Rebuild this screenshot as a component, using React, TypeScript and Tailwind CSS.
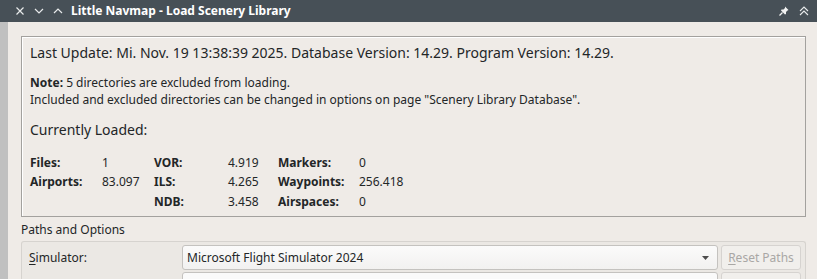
import React from 'react';

const stats: [string, string, string, string, string, string][] = [
  ['Files:', '1', 'VOR:', '4.919', 'Markers:', '0'],
  ['Airports:', '83.097', 'ILS:', '4.265', 'Waypoints:', '256.418'],
  ['', '', 'NDB:', '3.458', 'Airspaces:', '0'],
];

const App: React.FC = () => {
  return (
    <div className="w-[817px] h-[279px] overflow-hidden bg-[#efebe7] text-[#232627] font-['Noto_Sans',sans-serif] flex flex-col">
      {/* Title bar */}
      <div className="h-[22px] shrink-0 bg-[#475057] flex items-center text-white">
        <div className="flex items-center pl-[16px]">
          <svg width="8" height="8" viewBox="0 0 8 8">
            <path d="M0.5 0.5l7 7M7.5 0.5l-7 7" stroke="#e8eaeb" strokeWidth="1.2" fill="none" />
          </svg>
          <svg width="10" height="6" viewBox="0 0 10 6" className="ml-[10px]">
            <path d="M1 1l4 4 4-4" stroke="#e8eaeb" strokeWidth="1.2" fill="none" />
          </svg>
          <svg width="10" height="6" viewBox="0 0 10 6" className="ml-[9px]">
            <path d="M1 5l4-4 4 4" stroke="#e8eaeb" strokeWidth="1.2" fill="none" />
          </svg>
        </div>
        <span className="ml-[8px] text-[12px] font-bold">Little Navmap - Load Scenery Library</span>
        <div className="ml-auto flex items-center gap-[10px] pr-[8px]">
          <svg width="10" height="10" viewBox="0 0 10 10">
            <path d="M6 0.5l3.5 3.5-1 0.5-1.5 1.5 0 2-1 0.5-4-4 0.5-1 2 0 1.5-1.5z" fill="#f2f2f2" />
            <path d="M3.5 6.5l-3 3" stroke="#f2f2f2" strokeWidth="1.2" />
          </svg>
          <svg width="10" height="10" viewBox="0 0 10 10">
            <path d="M1 5l4-4 4 4M1 9l4-4 4 4" stroke="#e8eaeb" strokeWidth="1.1" fill="none" />
          </svg>
        </div>
      </div>

      <div className="flex flex-1 min-h-0">
        <div className="w-[8px] shrink-0 bg-[#c0c0c0]" />
        <div className="flex-1 pl-[13px] pr-[11px] flex flex-col min-h-0">
          {/* Database info frame */}
          <div className="shrink-0 mt-[14px] h-[181px] border border-[#a3a19e] shadow-[inset_1px_1px_0_#ffffff] px-[8px] pt-[6px]">
            <div className="text-[14px] leading-[20px]">
              Last Update: Mi. Nov. 19 13:38:39 2025. Database Version: 14.29. Program Version: 14.29.
            </div>
            <div className="mt-[11px] text-[12px] leading-[17px]">
              <div><span className="font-bold">Note:</span> 5 directories are excluded from loading.</div>
              <div>Included and excluded directories can be changed in options on page "Scenery Library Database".</div>
            </div>
            <div className="mt-[12px] text-[14px] leading-[20px]">Currently Loaded:</div>
            <div className="mt-[13px] text-[12px] flex flex-col">
              {stats.map((r, i) => (
                <div key={i} className="flex items-center h-[19.5px] whitespace-nowrap">
                  <span className="w-[72px] shrink-0 font-bold">{r[0]}</span>
                  <span className="w-[52px] shrink-0">{r[1]}</span>
                  <span className="w-[74px] shrink-0 font-bold">{r[2]}</span>
                  <span className="w-[50px] shrink-0">{r[3]}</span>
                  <span className="w-[81px] shrink-0 font-bold">{r[4]}</span>
                  <span>{r[5]}</span>
                </div>
              ))}
            </div>
          </div>

          {/* Paths and Options */}
          <div className="shrink-0 mt-[4px] text-[12px] leading-[17px] w-[104px] overflow-hidden whitespace-nowrap">Paths and Options</div>
          <div className="shrink-0 mt-[3px] h-[60px] border border-[#d6d3cf] border-b-0 rounded-t-[3px] bg-[#ebe8e4] pl-[7px] pr-[4px] pt-[3px]">
            <div className="flex items-center h-[25px]">
              <span className="w-[153px] text-[12px]"><span className="underline underline-offset-[2px]">S</span>imulator:</span>
              <div className="w-[536px] h-[25px] rounded-[3px] border border-[#c4c2bf] bg-gradient-to-b from-[#fbfbfb] to-[#f2f1f0] flex items-center pl-[4px] pr-[8px] text-[12px]">
                <span className="flex-1">Microsoft Flight Simulator 2024</span>
                <svg width="7" height="4" viewBox="0 0 7 4"><path d="M0 0h7l-3.5 4z" fill="#4d4d4d" /></svg>
              </div>
              <div className="ml-[3px] w-[80px] h-[25px] rounded-[3px] border border-[#d6d3d0] bg-[#f1efec] flex items-center justify-center text-[12px] text-[#a9a7a5]">
                <span><span className="underline underline-offset-[2px]">R</span>eset Paths</span>
              </div>
            </div>
            <div className="flex items-center mt-[2px] h-[25px]">
              <span className="w-[153px]" />
              <div className="w-[536px] h-[25px] rounded-[3px] border border-[#c4c2bf] bg-[#fafafa]" />
              <div className="ml-[3px] w-[80px] h-[25px] rounded-[3px] border border-[#d6d3d0] bg-[#f1efec]" />
            </div>
          </div>
        </div>
      </div>
    </div>
  );
};

export default App;
